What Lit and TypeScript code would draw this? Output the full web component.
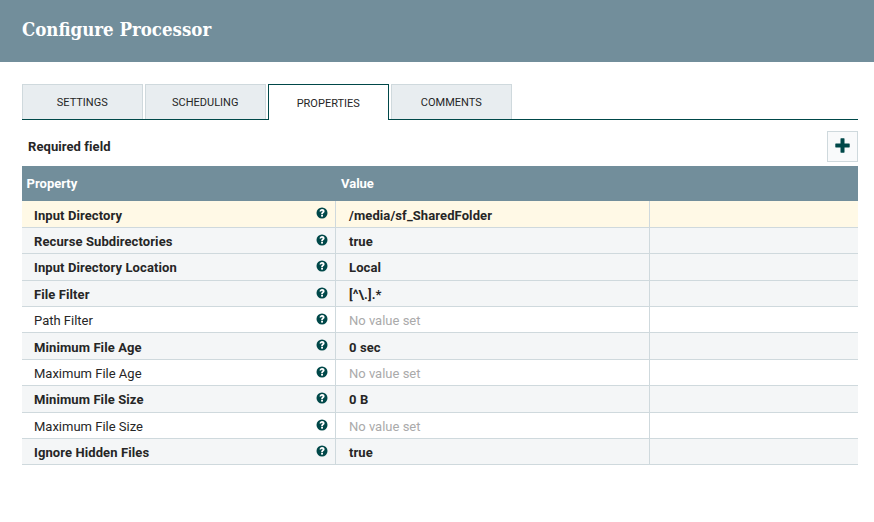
import { LitElement, html, css } from "lit"
import { customElement } from "lit/decorators.js"

type Row = { name: string; value: string; required: boolean; set: boolean }

const rows: Row[] = [
  { name: "Input Directory", value: "/media/sf_SharedFolder", required: true, set: true },
  { name: "Recurse Subdirectories", value: "true", required: true, set: true },
  { name: "Input Directory Location", value: "Local", required: true, set: true },
  { name: "File Filter", value: "[^\\.].*", required: true, set: true },
  { name: "Path Filter", value: "No value set", required: false, set: false },
  { name: "Minimum File Age", value: "0 sec", required: true, set: true },
  { name: "Maximum File Age", value: "No value set", required: false, set: false },
  { name: "Minimum File Size", value: "0 B", required: true, set: true },
  { name: "Maximum File Size", value: "No value set", required: false, set: false },
  { name: "Ignore Hidden Files", value: "true", required: true, set: true },
]

const tabs = ["SETTINGS", "SCHEDULING", "PROPERTIES", "COMMENTS"]

@customElement("app-root")
export class AppRoot extends LitElement {
  static styles = css`
    :host {
      display: block;
      width: 874px;
      height: 522px;
      background: #fff;
      font-family: Roboto, sans-serif;
      color: #262626;
    }
    .header {
      height: 62px;
      box-sizing: border-box;
      background: #728e9b;
      color: #fff;
      padding: 18px 0 0 22px;
      font-family: "DejaVu Serif", serif;
      font-stretch: condensed;
      font-size: 18.5px;
      font-weight: 700;
      line-height: 24px;
    }
    .body {
      padding: 22px 16px 0 22px;
    }
    .tabs {
      display: flex;
      gap: 2px;
      height: 36px;
      box-sizing: border-box;
      border-bottom: 1px solid #004849;
    }
    .tab {
      width: 121px;
      height: 35px;
      box-sizing: border-box;
      background: #e8edf0;
      border: 1px solid #cfd9dd;
      border-bottom: none;
      display: flex;
      align-items: center;
      justify-content: center;
      font-size: 11px;
      color: #262626;
      padding: 1px 0.5px 0 0;
    }
    .tab.active {
      height: 36px;
      background: #fff;
      border: 1px solid #004849;
      border-bottom: none;
    }
    .toolbar {
      height: 46px;
      display: flex;
      align-items: flex-start;
      justify-content: space-between;
      padding: 11px 0 0 6px;
      box-sizing: border-box;
      font-size: 13px;
      font-weight: 700;
      letter-spacing: 0.08px;
      line-height: 31px;
    }
    .add {
      width: 31px;
      height: 31px;
      box-sizing: border-box;
      background: #f9fafb;
      border: 1px solid #cfd9dd;
      display: flex;
      align-items: center;
      justify-content: center;
    }
    .add svg {
      margin-bottom: 3px;
    }
    .table-head {
      height: 35.45px;
      background: #728e9b;
      color: #fff;
      font-size: 13px;
      font-weight: 700;
      display: grid;
      grid-template-columns: 314.4px 1fr;
      align-items: center;
      padding-left: 4.6px;
    }
    .row {
      height: 26.4px;
      box-sizing: border-box;
      display: grid;
      grid-template-columns: 314px 314px 1fr;
      border-bottom: 1px solid #cfd9dd;
      font-size: 13px;
      background: #fff;
      color: #262626;
    }
    .row.odd {
      background: #f4f6f7;
    }
    .row.first {
      background: #fff9e6;
    }
    .cell {
      display: flex;
      align-items: center;
      border-right: 1px solid #cfd9dd;
      min-width: 0;
    }
    .cell:last-child {
      border-right: none;
    }
    .name {
      justify-content: space-between;
      padding: 2px 7px 0 12px;
    }
    .name svg {
      margin-bottom: 3.5px;
    }
    .value {
      padding: 2px 0 0 13px;
    }
    .bold {
      font-weight: 700;
      letter-spacing: 0.1px;
    }
    .unset {
      color: #aaaaaa;
    }
  `

  helpIcon() {
    return html`<svg width="12" height="12" viewBox="0 0 12 12">
      <circle cx="6" cy="6" r="5.5" fill="#004849"></circle>
      <path d="M3.5 4.6C3.6 3 4.7 2.1 6.1 2.1c1.4 0 2.5.9 2.5 2.2 0 1.6-1.6 1.7-1.6 2.7H5.1c0-1.8 1.5-1.8 1.5-2.7 0-.4-.2-.6-.6-.6-.5 0-.7.3-.8.9z" fill="#fff"></path>
      <rect x="5.1" y="7.7" width="1.9" height="1.9" fill="#fff"></rect>
    </svg>`
  }

  render() {
    return html`
      <div class="header">Configure Processor</div>
      <div class="body">
        <div class="tabs">
          ${tabs.map((t) => html`<div class="tab ${t === "PROPERTIES" ? "active" : ""}">${t}</div>`)}
        </div>
        <div class="toolbar">
          <span>Required field</span>
          <div class="add">
            <svg width="15" height="15" viewBox="0 0 15 15">
              <path d="M6 .3h3c.3 0 .5.2.5.5v4.700h4.700c.3 0 .5.2.5.5v3c0 .3-.2.5-.5.5H9.500v4.700c0 .3-.2.5-.5.5H6c-.3 0-.5-.2-.5-.5V9.500H.8c-.3 0-.5-.2-.5-.5V6c0-.3.2-.5.5-.5h4.700V.8c0-.3.2-.5.5-.5z" fill="#004849"></path>
            </svg>
          </div>
        </div>
        <div class="table-head"><span>Property</span><span>Value</span></div>
        ${rows.map(
          (r, i) => html`
            <div class="row ${i === 0 ? "first" : ""} ${r.required ? "odd" : ""}">
              <div class="cell name ${r.required ? "bold" : ""}">
                <span>${r.name}</span>${this.helpIcon()}
              </div>
              <div class="cell value ${r.set ? "bold" : "unset"}">${r.value}</div>
              <div class="cell"></div>
            </div>
          `
        )}
      </div>
    `
  }
}
